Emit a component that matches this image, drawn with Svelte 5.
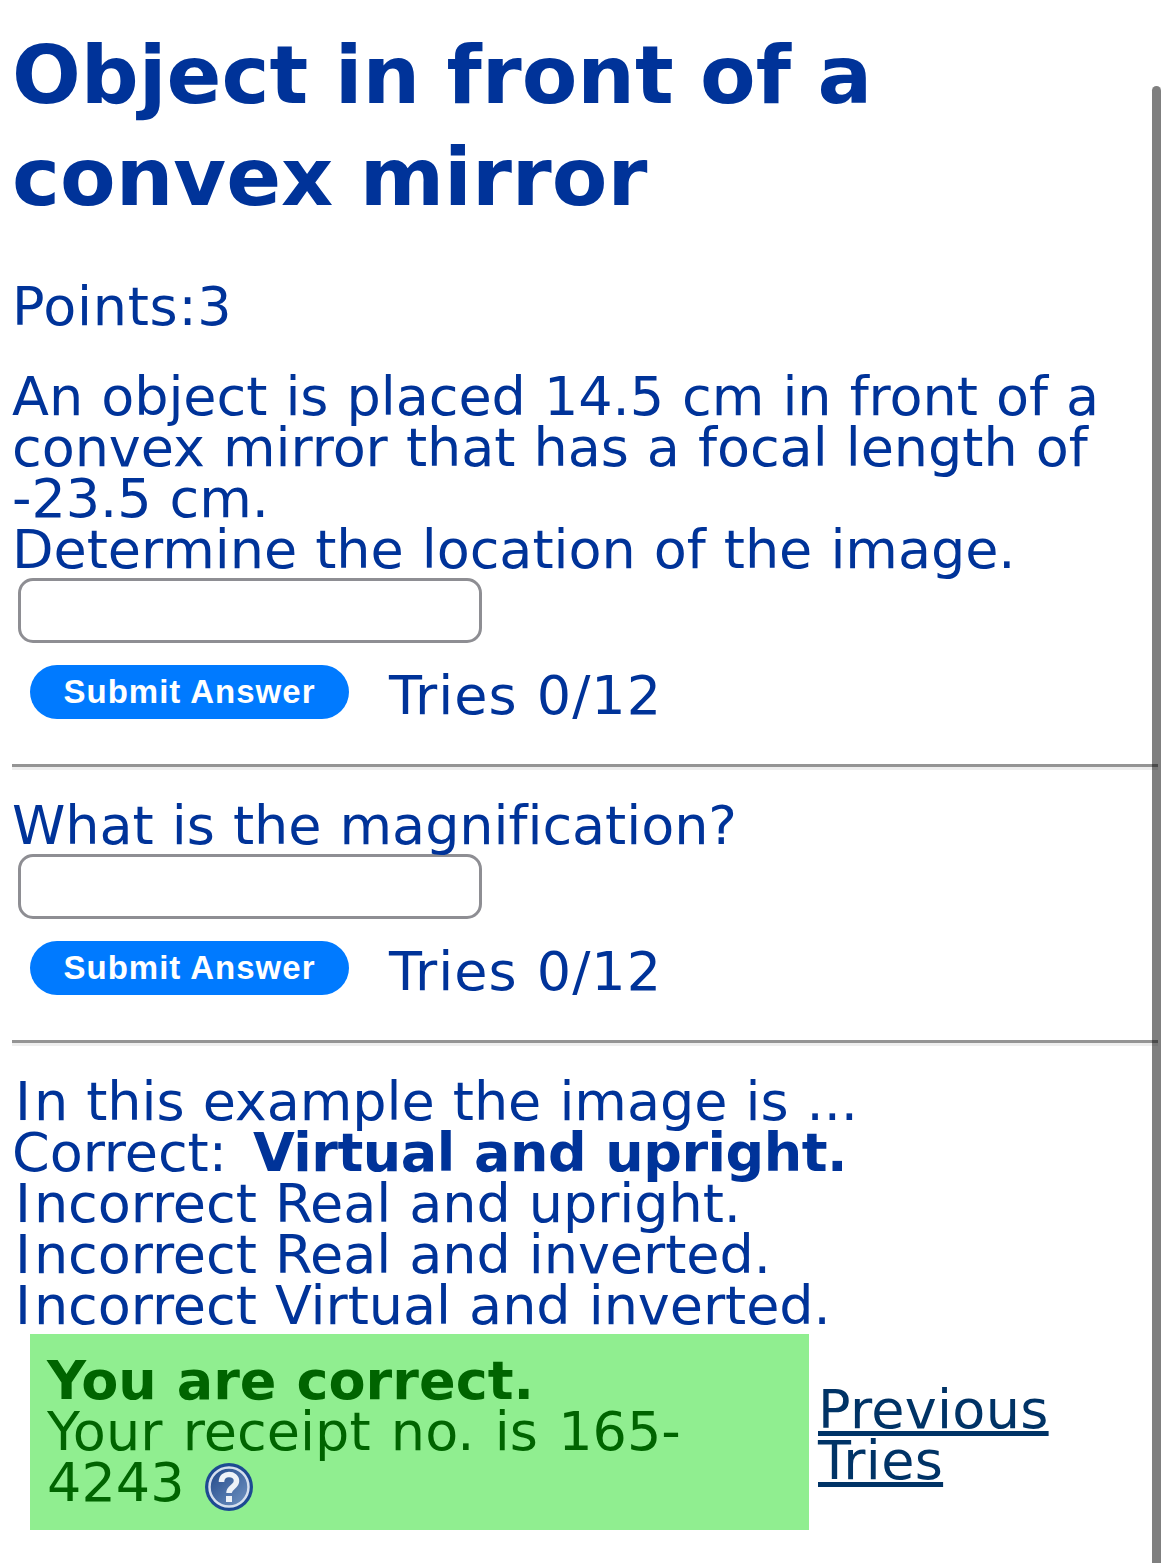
<script lang="ts">
	const parts = [
		{ intro: 'An object is placed 14.5 cm in front of a convex mirror that has a focal length of -23.5 cm.', ask: 'Determine the location of the image.' },
		{ intro: '', ask: 'What is the magnification?' }
	];
	const wrong = ['Real and upright.', 'Real and inverted.', 'Virtual and inverted.'];
</script>

<div class="page">
	<h1>Object in front of a convex mirror</h1>
	<p class="points">Points:3</p>

	{#each parts as part}
		<div class="part">
			<div class="prompt">
				{#if part.intro}{part.intro}<br />{/if}{part.ask}
			</div>
			<input class="answer" type="text" />
			<div class="actions">
				<button class="submit">Submit Answer</button>
				<span class="tries">Tries 0/12</span>
			</div>
			<hr />
		</div>
	{/each}

	<div class="choices">
		<div><span class="cap-i">I</span>n this example the image is ...</div>
		<div>Correct: <b>Virtual and upright.</b></div>
		{#each wrong as item}
			<div><span class="cap-i">I</span>ncorrect {item}</div>
		{/each}
	</div>

	<div class="result">
		<div class="receipt">
			<strong>You are correct.</strong><br />
			Your receipt no. is 165-4243
			<svg class="help" viewBox="0 0 48 48" width="48" height="48" aria-hidden="true">
				<defs>
					<linearGradient id="helpFill" x1="0" y1="0" x2="1" y2="1">
						<stop offset="0" stop-color="#1f4688" />
						<stop offset="1" stop-color="#7396c4" />
					</linearGradient>
					<filter id="helpSoft" x="-10%" y="-10%" width="120%" height="120%">
						<feGaussianBlur stdDeviation="0.6" />
					</filter>
				</defs>
				<circle cx="24" cy="24" r="24" fill="#1d4a92" />
				<g filter="url(#helpSoft)">
					<circle cx="24" cy="24" r="19.5" fill="url(#helpFill)" stroke="#d5dfee" stroke-width="2.5" />
					<path d="M16.5 19c0-5 3.4-7.5 7.5-7.5s7.5 2.6 7.5 6.5c0 6-7.5 6-7.5 12" fill="none" stroke="#eef2f8" stroke-width="5.5" />
					<rect x="21" y="33" width="6" height="6" fill="#eef2f8" />
				</g>
			</svg>
		</div>
		<a class="previous" href="#previous">Previous Tries</a>
	</div>

	<div class="scrollbar"></div>
</div>

<style>
	:global(body) {
		margin: 0;
		background: #fff;
	}

	.page {
		position: relative;
		height: 1563px;
		box-sizing: border-box;
		padding: 24px 12px 0;
		overflow: hidden;
		color: #003399;
		font-family: "DejaVu Sans", sans-serif;
		font-size: 54px;
		line-height: 51px;
		letter-spacing: -0.05px;
		word-spacing: 1px;
		font-variant-ligatures: none;
	}

	h1 {
		margin: 0;
		width: 1000px;
		font-size: 81px;
		line-height: 102px;
		font-weight: bold;
		letter-spacing: 0;
		word-spacing: -1.8px;
	}

	.points {
		margin: 53px 0 0;
		letter-spacing: 0.7px;
	}

	.part:first-of-type {
		margin-top: 39px;
	}

	.prompt {
		width: 1130px;
	}

	.answer {
		display: block;
		box-sizing: border-box;
		width: 464px;
		height: 65px;
		margin: 3px 0 0 6px;
		padding: 0;
		background: #fff;
		border: 3px solid #8e8e93;
		border-radius: 15px;
		outline: none;
	}

	.actions {
		display: flex;
		align-items: flex-start;
		gap: 40px;
		margin: 22px 0 0 18px;
	}

	.submit {
		width: 319px;
		height: 54px;
		padding: 0;
		border: none;
		border-radius: 27px;
		background: #007aff;
		color: #fff;
		font-family: "Liberation Sans", sans-serif;
		font-size: 33px;
		font-weight: bold;
		letter-spacing: 1px;
		word-spacing: 0;
	}

	.tries {
		margin-top: 5px;
		letter-spacing: 1px;
	}

	hr {
		box-sizing: border-box;
		width: 1146px;
		height: 6px;
		margin: 43px 0 30px;
		border: none;
		border-top: 3px solid #949494;
		border-bottom: 3px solid #eeeeee;
	}

	.cap-i {
		padding: 0 3px;
	}

	.choices b {
		margin-left: 8px;
		letter-spacing: -0.5px;
	}

	.result {
		display: flex;
		align-items: center;
		margin: 3px 0 0 18px;
	}

	.receipt {
		box-sizing: border-box;
		width: 779px;
		height: 196px;
		padding: 21px 17px 0;
		background: #90ee90;
		color: #006400;
		letter-spacing: 0.05px;
		word-spacing: 3px;
	}

	.receipt strong {
		word-spacing: 1px;
	}

	.help {
		vertical-align: -10px;
	}

	.previous {
		width: 240px;
		margin: 6px 0 0 9px;
		color: #003366;
		letter-spacing: 0.3px;
	}

	.scrollbar {
		position: absolute;
		top: 86px;
		bottom: 0;
		left: 1152px;
		width: 9px;
		border-radius: 5px 5px 0 0;
		background: rgba(0, 0, 0, 0.5);
	}
</style>
